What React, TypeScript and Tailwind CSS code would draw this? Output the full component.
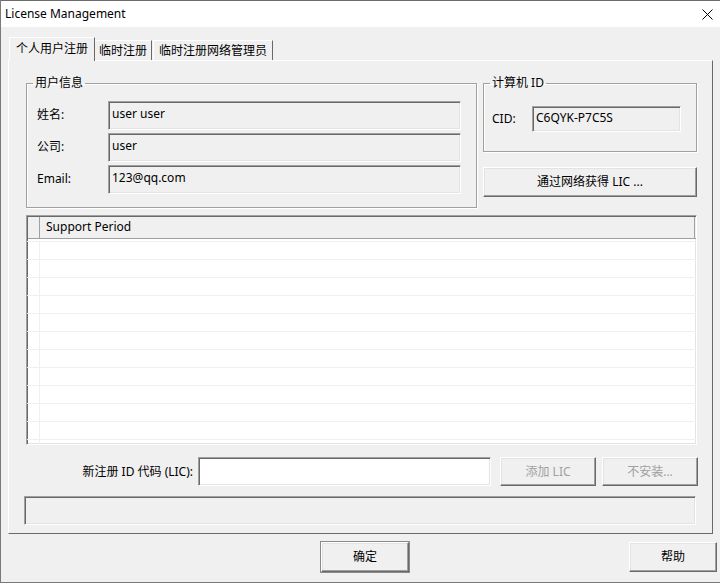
import React from "react";

const font = { fontFamily: '"Noto Sans", "Noto Sans CJK SC", sans-serif' };

const sunken =
  "border border-t-[#a0a0a0] border-l-[#a0a0a0] border-b-white border-r-white shadow-[inset_1px_1px_0_#696969,inset_-1px_-1px_0_#e3e3e3]";
const raised =
  "border border-t-white border-l-white border-b-[#696969] border-r-[#696969] shadow-[inset_-1px_-1px_0_#a0a0a0,inset_1px_1px_0_#e3e3e3]";
const etched =
  "border border-[#a0a0a0] shadow-[inset_1px_1px_0_#fff,1px_1px_0_#fff]";

function Field({ label, value }: { label: string; value: string }) {
  return (
    <div className="flex items-center h-[29px]">
      <span className="w-[81px] pl-[10px] -mt-[2px]">{label}</span>
      <div className={`${sunken} w-[353px] h-[29px] bg-[#f0f0f0] pl-[3px] pt-[2px] leading-[20px]`}>
        {value}
      </div>
    </div>
  );
}

export default function App() {
  const rows = Array.from({ length: 12 });
  return (
    <div className="w-[720px] h-[583px] bg-[#f0f0f0] text-[12px] text-black overflow-hidden border-l border-b border-[#7a7a7a] flex flex-col" style={font}>
      {/* title bar */}
      <div className="h-[27px] bg-white border-t border-[#6b6b6b] flex items-center justify-between pl-[4px] pr-[6px] shrink-0">
        <span className="text-[12px]">License Management</span>
        <svg width="11" height="11" viewBox="0 0 11 11" className="mr-[1px]">
          <path d="M0.5 0.5 L10.5 10.5 M10.5 0.5 L0.5 10.5" stroke="#000" strokeWidth="1" />
        </svg>
      </div>

      <div className="pt-[10px] pl-[7px]">
        {/* tabs */}
        <div className="flex items-end pl-[1px] h-[23px]">
          <div className="relative z-10 -mb-px h-[24px] px-[6px] pt-[2px] bg-[#f0f0f0] border-t border-l border-white border-r border-r-[#696969] leading-[18px]">
            个人用户注册
          </div>
          <div className="h-[20px] px-[4px] pt-[2px] border-t border-white border-r border-r-[#696969] leading-[16px]">
            临时注册
          </div>
          <div className="h-[20px] px-[5px] pt-[2px] ml-px border-t border-l border-white border-r border-r-[#696969] leading-[16px]">
            临时注册网络管理员
          </div>
        </div>

        {/* panel */}
        <div className="w-[705px] h-[474px] border border-t-white border-l-white border-r-[#696969] border-b-[#696969] pt-[14px] pl-[17px]">
          <div className="flex gap-[6px]">
            <fieldset className={`${etched} w-[451px] h-[133px] px-[0px]`}>
              <legend className="ml-[6px] px-[2px] leading-[16px]">用户信息</legend>
              <div className="flex flex-col gap-[3px] pt-[10px]">
                <Field label="姓名:" value="user user" />
                <Field label="公司:" value="user" />
                <Field label="Email:" value="123@qq.com" />
              </div>
            </fieldset>

            <div className="flex flex-col w-[214px]">
              <fieldset className={`${etched} h-[77px]`}>
                <legend className="ml-[6px] px-[2px] leading-[16px]">计算机 ID</legend>
                <div className="flex items-center pl-[8px] pt-[15px]">
                  <span className="w-[40px]">CID:</span>
                  <div className={`${sunken} w-[149px] h-[26px] pl-[3px] leading-[22px]`}>C6QYK-P7C5S</div>
                </div>
              </fieldset>
              <button className={`${raised} mt-[15px] h-[30px] bg-[#f0f0f0] text-center`}>
                通过网络获得 LIC ...
              </button>
            </div>
          </div>

          {/* list */}
          <div className={`${sunken} mt-[7px] w-[671px] h-[230px] bg-white overflow-hidden`}>
            <div className="flex h-[22px] bg-[#f0f0f0] border-b border-[#a0a0a0] ml-px mt-px">
              <div className="w-[12px] border-r border-[#a0a0a0]" />
              <div className="w-[655px] border-r border-[#a0a0a0] pl-[6px] leading-[20px]">Support Period</div>
            </div>
            <div className="pt-[2px]">
              {rows.map((_, i) => (
                <div key={i} className="flex h-[18px] border-t border-[#f0f0f0]">
                  <div className="w-[13px] border-r border-[#f0f0f0]" />
                </div>
              ))}
            </div>
          </div>

          {/* new id row */}
          <div className="flex items-center mt-[12px] h-[29px]">
            <span className="w-[172px] text-right pr-[5px]">新注册 ID 代码 (LIC):</span>
            <div className={`${sunken} w-[293px] h-[29px] bg-white`} />
            <button disabled className={`${raised} ml-[9px] w-[96px] h-[29px] bg-[#f0f0f0] text-[#a0a0a0]`}>
              添加 LIC
            </button>
            <button disabled className={`${raised} ml-[6px] w-[96px] h-[29px] bg-[#f0f0f0] text-[#a0a0a0]`}>
              不安装...
            </button>
          </div>

          {/* status */}
          <div className={`${sunken} mt-[10px] -ml-[2px] w-[672px] h-[29px]`} />
        </div>

        {/* bottom buttons */}
        <div className="flex mt-[8px] pl-[313px]">
          <button className={`${raised} w-[88px] h-[30px] bg-[#f0f0f0] outline outline-1 outline-[#8a8a8a]`}>确定</button>
          <button className={`${raised} ml-[220px] w-[88px] h-[30px] bg-[#f0f0f0]`}>帮助</button>
        </div>
      </div>
    </div>
  );
}
